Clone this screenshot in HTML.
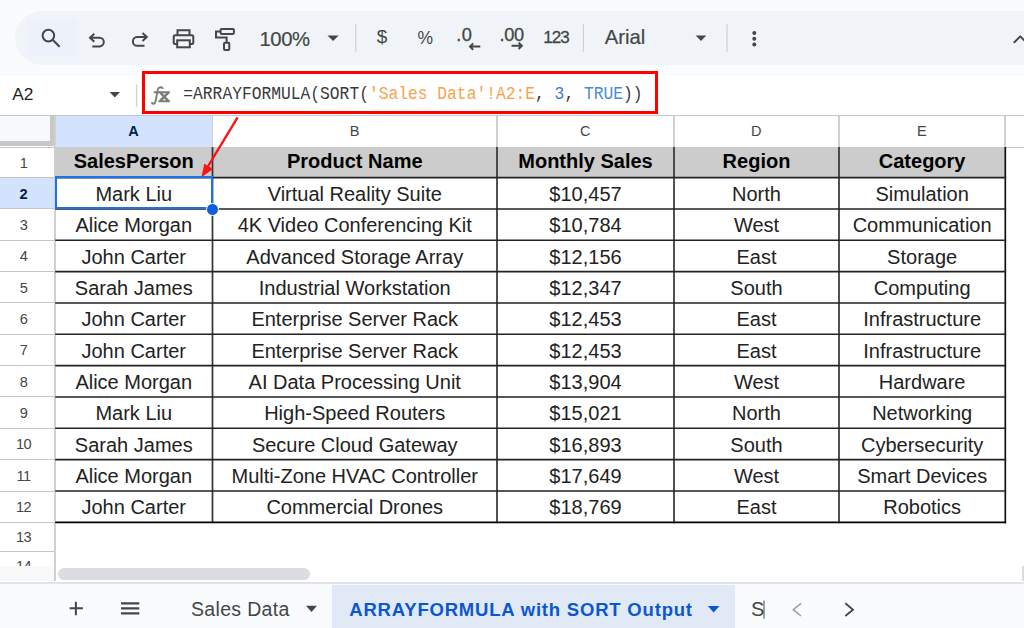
<!DOCTYPE html>
<html><head><meta charset="utf-8">
<style>
*{box-sizing:border-box}
html,body{margin:0;padding:0}
body{width:1024px;height:628px;overflow:hidden;position:relative;background:#fff;font-family:"Liberation Sans",sans-serif;color:#000}
.a{position:absolute}
.t{position:absolute;white-space:nowrap}
.c{text-align:center}
.ic{position:absolute;fill:none;stroke:#444746;stroke-width:2}
</style></head><body>

<div class="a" style="left:0;top:0;width:1024px;height:76px;background:#f9fbfd"></div>
<div class="a" style="left:15px;top:11px;width:1060px;height:54px;border-radius:27px;background:#f0f4f9"></div>
<div class="a" style="left:27px;top:19px;width:50px;height:37px;background:#edf1f9"></div>
<svg class="ic" style="left:0;top:0" width="1024" height="76" viewBox="0 0 1024 76">
<circle cx="48.4" cy="35.6" r="5.8"/>
<path d="M52.6 39.8 L59.6 46.8"/>
<path d="M94.3 33.8 L90 37.8 L94.3 41.8 M90.5 37.8 H99.5 A4.3 4.3 0 0 1 99.5 46.4 H92.3"/>
<path d="M142.5 33 L146.8 37 L142.5 41 M146.3 37 H137.3 A4.4 4.4 0 0 0 137.3 45.8 H144.5"/>
<path d="M177.5 36 V30.2 H189.5 V36" />
<rect x="173.7" y="35.2" width="19.6" height="8.8" rx="1.5"/>
<rect x="177.2" y="40.3" width="12.6" height="7" fill="#f0f4f9"/>
<rect x="220.6" y="28.9" width="13.3" height="5" rx="1.2"/>
<path d="M220.6 31.4 H216 V37.5 H226.6 V42.8"/>
<rect x="224" y="42.8" width="5.3" height="7.2" rx="1"/>
<path d="M338.7 35.5 L333.1 41 L327.5 35.5 Z" fill="#444746" stroke="none"/>
<path d="M706.3 35.5 L701 41 L695.7 35.5 Z" fill="#444746" stroke="none"/>
<path d="M355.8 24.3 V51.7 M583.3 24.3 V51.7 M727 24.3 V51.7" stroke="#c7c7c7" stroke-width="1"/>
<circle cx="754.3" cy="32.9" r="2" fill="#444746" stroke="none"/>
<circle cx="754.3" cy="38.7" r="2" fill="#444746" stroke="none"/>
<circle cx="754.3" cy="44.5" r="2" fill="#444746" stroke="none"/>
<path d="M1014.4 42.2 L1020.3 36.4 L1026.2 42.2" stroke-linejoin="round" stroke-linecap="round"/>
<path d="M470 46.6 H480.3 M473.2 43.4 L470 46.6 L473.2 49.8" stroke-width="2"/>
<path d="M511.5 45.8 H521.8 M518.6 42.6 L521.8 45.8 L518.6 49" stroke-width="2"/>
</svg>
<div class="t" style="left:259.50px;top:29.02px;font-size:20.30px;line-height:20.30px;color:#444746;-webkit-text-stroke:0.2px #444746;letter-spacing:-0.45px">100%</div>
<div class="t" style="left:376.80px;top:27.42px;font-size:19.00px;line-height:19.00px;color:#444746;">$</div>
<div class="t" style="left:417.50px;top:29.89px;font-size:17.50px;line-height:17.50px;color:#444746;">%</div>
<div class="t" style="left:456.30px;top:25.79px;font-size:18.20px;line-height:18.20px;color:#444746;letter-spacing:0.3px;-webkit-text-stroke:0.3px #444746">.0</div>
<div class="t" style="left:499.40px;top:25.79px;font-size:18.20px;line-height:18.20px;color:#444746;letter-spacing:-0.3px;-webkit-text-stroke:0.3px #444746">.00</div>
<div class="t" style="left:543.30px;top:29.41px;font-size:17.00px;line-height:17.00px;color:#444746;letter-spacing:-1px;-webkit-text-stroke:0.3px #444746">123</div>
<div class="t" style="left:604.80px;top:26.52px;font-size:20.30px;line-height:20.30px;color:#444746;-webkit-text-stroke:0.2px #444746">Arial</div>
<div class="a" style="left:0;top:76px;width:1024px;height:39px;background:#fff"></div>
<div class="t" style="left:12.30px;top:85.96px;font-size:17.30px;line-height:17.30px;color:#1f1f1f;">A2</div>
<svg class="a" style="left:0;top:76px" width="1024" height="40"><path d="M109.6 16 H120 L114.8 21.6 Z" fill="#444746"/><path d="M136.7 8.4 V30.8" stroke="#c7c7c7" stroke-width="1"/></svg>
<svg class="a" style="left:0;top:0" width="200" height="120" fill="none" stroke="#7b7b7b" stroke-width="2"><path d="M153.7 92.2 H169.8 M158.4 101.2 H169.9" stroke-width="1.9"/><path d="M160.2 92.6 L168.3 100.9 M168.3 92.6 L160.2 100.9" stroke-width="2.5"/><path d="M163 88.8 C162 86.6 158.6 86.6 157.8 89.6 L155.6 101 C155 104.3 152.6 104.6 151.6 102.2" stroke-width="1.9"/></svg>
<div class="t" style="left:183.3px;top:85.7px;font-size:16.3px;line-height:16px;transform:scaleY(1.12);transform-origin:0 0;font-family:'Liberation Mono',monospace;color:#3a3a3a">=ARRAYFORMULA(SORT(<span style="color:#f5a34e">'Sales Data'!A2:E</span>, <span style="color:#3b78e7">3</span>, <span style="color:#4a8ad8">TRUE</span>))</div>
<div class="a" style="left:142px;top:71px;width:516px;height:43.2px;border:3.6px solid #ff0000"></div>
<div class="a" style="left:0;top:115px;width:1024px;height:1px;background:#c7c7c7"></div>
<div class="a" style="left:0;top:116px;width:50px;height:25px;background:#f8f9fa"></div>
<div class="a" style="left:0;top:141px;width:55px;height:5px;background:#c8c8c8"></div>
<div class="a" style="left:49.5px;top:116px;width:5.5px;height:30px;background:#c8c8c8"></div>
<div class="a" style="left:0;top:146.5px;width:55px;height:1px;background:#c7c7c7"></div>
<div class="a" style="left:55px;top:116px;width:157.5px;height:31px;background:#d3e3fd"></div>
<div class="t c" style="left:55.00px;top:123.73px;font-size:14.50px;line-height:14.50px;color:#041e49;width:157.00px;font-weight:bold">A</div>
<div class="t c" style="left:212.50px;top:123.73px;font-size:14.50px;line-height:14.50px;color:#444746;width:284.00px;">B</div>
<div class="t c" style="left:497.00px;top:123.73px;font-size:14.50px;line-height:14.50px;color:#444746;width:176.50px;">C</div>
<div class="t c" style="left:674.00px;top:123.73px;font-size:14.50px;line-height:14.50px;color:#444746;width:164.50px;">D</div>
<div class="t c" style="left:839.00px;top:123.73px;font-size:14.50px;line-height:14.50px;color:#444746;width:165.80px;">E</div>
<div class="a" style="left:54.15px;top:116px;width:1.7px;height:31px;background:#d0d0d0"></div>
<div class="a" style="left:211.65px;top:116px;width:1.7px;height:31px;background:#d0d0d0"></div>
<div class="a" style="left:496.15px;top:116px;width:1.7px;height:31px;background:#d0d0d0"></div>
<div class="a" style="left:673.15px;top:116px;width:1.7px;height:31px;background:#d0d0d0"></div>
<div class="a" style="left:838.15px;top:116px;width:1.7px;height:31px;background:#d0d0d0"></div>
<div class="a" style="left:1004.45px;top:116px;width:1.7px;height:31px;background:#d0d0d0"></div>
<div class="a" style="left:55px;top:146.6px;width:969px;height:1px;background:#c7c7c7"></div>
<div class="a" style="left:53.9px;top:147px;width:1.9px;height:434px;background:#d0d0d0"></div>
<div class="a" style="left:0;top:177.60px;width:54.2px;height:31.34px;background:#d3e3fd"></div>
<div class="a" style="left:0;top:177.10px;width:54.2px;height:1px;background:#c7c7c7"></div>
<div class="t c" style="left:0.00px;top:155.64px;font-size:14.60px;line-height:14.60px;color:#444746;width:47.00px;letter-spacing:-0.6px">1</div>
<div class="a" style="left:0;top:208.44px;width:54.2px;height:1px;background:#c7c7c7"></div>
<div class="t c" style="left:0.00px;top:186.61px;font-size:14.60px;line-height:14.60px;color:#041e49;width:47.00px;font-weight:bold">2</div>
<div class="a" style="left:0;top:239.78px;width:54.2px;height:1px;background:#c7c7c7"></div>
<div class="t c" style="left:0.00px;top:217.95px;font-size:14.60px;line-height:14.60px;color:#444746;width:47.00px;letter-spacing:-0.6px">3</div>
<div class="a" style="left:0;top:271.12px;width:54.2px;height:1px;background:#c7c7c7"></div>
<div class="t c" style="left:0.00px;top:249.29px;font-size:14.60px;line-height:14.60px;color:#444746;width:47.00px;letter-spacing:-0.6px">4</div>
<div class="a" style="left:0;top:302.46px;width:54.2px;height:1px;background:#c7c7c7"></div>
<div class="t c" style="left:0.00px;top:280.63px;font-size:14.60px;line-height:14.60px;color:#444746;width:47.00px;letter-spacing:-0.6px">5</div>
<div class="a" style="left:0;top:333.80px;width:54.2px;height:1px;background:#c7c7c7"></div>
<div class="t c" style="left:0.00px;top:311.97px;font-size:14.60px;line-height:14.60px;color:#444746;width:47.00px;letter-spacing:-0.6px">6</div>
<div class="a" style="left:0;top:365.14px;width:54.2px;height:1px;background:#c7c7c7"></div>
<div class="t c" style="left:0.00px;top:343.31px;font-size:14.60px;line-height:14.60px;color:#444746;width:47.00px;letter-spacing:-0.6px">7</div>
<div class="a" style="left:0;top:396.48px;width:54.2px;height:1px;background:#c7c7c7"></div>
<div class="t c" style="left:0.00px;top:374.65px;font-size:14.60px;line-height:14.60px;color:#444746;width:47.00px;letter-spacing:-0.6px">8</div>
<div class="a" style="left:0;top:427.82px;width:54.2px;height:1px;background:#c7c7c7"></div>
<div class="t c" style="left:0.00px;top:405.99px;font-size:14.60px;line-height:14.60px;color:#444746;width:47.00px;letter-spacing:-0.6px">9</div>
<div class="a" style="left:0;top:459.16px;width:54.2px;height:1px;background:#c7c7c7"></div>
<div class="t c" style="left:0.00px;top:437.33px;font-size:14.60px;line-height:14.60px;color:#444746;width:47.00px;letter-spacing:-0.6px">10</div>
<div class="a" style="left:0;top:490.50px;width:54.2px;height:1px;background:#c7c7c7"></div>
<div class="t c" style="left:0.00px;top:468.67px;font-size:14.60px;line-height:14.60px;color:#444746;width:47.00px;letter-spacing:-0.6px">11</div>
<div class="a" style="left:0;top:521.84px;width:54.2px;height:1px;background:#c7c7c7"></div>
<div class="t c" style="left:0.00px;top:500.01px;font-size:14.60px;line-height:14.60px;color:#444746;width:47.00px;letter-spacing:-0.6px">12</div>
<div class="a" style="left:0;top:551.04px;width:54.2px;height:1px;background:#c7c7c7"></div>
<div class="t c" style="left:0.00px;top:530.28px;font-size:14.60px;line-height:14.60px;color:#444746;width:47.00px;letter-spacing:-0.6px">13</div>
<div class="a" style="left:0;top:580.24px;width:54.2px;height:1px;background:#c7c7c7"></div>
<div class="t c" style="left:0.00px;top:559.48px;font-size:14.60px;line-height:14.60px;color:#444746;width:47.00px;letter-spacing:-0.6px">14</div>
<div class="a" style="left:55px;top:147px;width:950.3px;height:30.60px;background:#cccccc"></div>
<div class="t c" style="left:55.00px;top:151.47px;font-size:20.00px;line-height:20.00px;color:#000;width:157.50px;font-weight:bold">SalesPerson</div>
<div class="t c" style="left:212.50px;top:151.47px;font-size:20.00px;line-height:20.00px;color:#000;width:284.50px;font-weight:bold">Product Name</div>
<div class="t c" style="left:497.00px;top:151.47px;font-size:20.00px;line-height:20.00px;color:#000;width:177.00px;font-weight:bold">Monthly Sales</div>
<div class="t c" style="left:674.00px;top:151.47px;font-size:20.00px;line-height:20.00px;color:#000;width:165.00px;font-weight:bold">Region</div>
<div class="t c" style="left:839.00px;top:151.47px;font-size:20.00px;line-height:20.00px;color:#000;width:166.30px;font-weight:bold">Category</div>
<div class="t c" style="left:55.00px;top:183.91px;font-size:20.00px;line-height:20.00px;color:#222;width:157.50px;">Mark Liu</div>
<div class="t c" style="left:212.50px;top:183.91px;font-size:20.00px;line-height:20.00px;color:#222;width:284.50px;">Virtual Reality Suite</div>
<div class="t c" style="left:497.00px;top:183.91px;font-size:20.00px;line-height:20.00px;color:#222;width:177.00px;">$10,457</div>
<div class="t c" style="left:674.00px;top:183.91px;font-size:20.00px;line-height:20.00px;color:#222;width:165.00px;">North</div>
<div class="t c" style="left:839.00px;top:183.91px;font-size:20.00px;line-height:20.00px;color:#222;width:166.30px;">Simulation</div>
<div class="t c" style="left:55.00px;top:215.25px;font-size:20.00px;line-height:20.00px;color:#222;width:157.50px;">Alice Morgan</div>
<div class="t c" style="left:212.50px;top:215.25px;font-size:20.00px;line-height:20.00px;color:#222;width:284.50px;">4K Video Conferencing Kit</div>
<div class="t c" style="left:497.00px;top:215.25px;font-size:20.00px;line-height:20.00px;color:#222;width:177.00px;">$10,784</div>
<div class="t c" style="left:674.00px;top:215.25px;font-size:20.00px;line-height:20.00px;color:#222;width:165.00px;">West</div>
<div class="t c" style="left:839.00px;top:215.25px;font-size:20.00px;line-height:20.00px;color:#222;width:166.30px;">Communication</div>
<div class="t c" style="left:55.00px;top:246.59px;font-size:20.00px;line-height:20.00px;color:#222;width:157.50px;">John Carter</div>
<div class="t c" style="left:212.50px;top:246.59px;font-size:20.00px;line-height:20.00px;color:#222;width:284.50px;">Advanced Storage Array</div>
<div class="t c" style="left:497.00px;top:246.59px;font-size:20.00px;line-height:20.00px;color:#222;width:177.00px;">$12,156</div>
<div class="t c" style="left:674.00px;top:246.59px;font-size:20.00px;line-height:20.00px;color:#222;width:165.00px;">East</div>
<div class="t c" style="left:839.00px;top:246.59px;font-size:20.00px;line-height:20.00px;color:#222;width:166.30px;">Storage</div>
<div class="t c" style="left:55.00px;top:277.93px;font-size:20.00px;line-height:20.00px;color:#222;width:157.50px;">Sarah James</div>
<div class="t c" style="left:212.50px;top:277.93px;font-size:20.00px;line-height:20.00px;color:#222;width:284.50px;">Industrial Workstation</div>
<div class="t c" style="left:497.00px;top:277.93px;font-size:20.00px;line-height:20.00px;color:#222;width:177.00px;">$12,347</div>
<div class="t c" style="left:674.00px;top:277.93px;font-size:20.00px;line-height:20.00px;color:#222;width:165.00px;">South</div>
<div class="t c" style="left:839.00px;top:277.93px;font-size:20.00px;line-height:20.00px;color:#222;width:166.30px;">Computing</div>
<div class="t c" style="left:55.00px;top:309.27px;font-size:20.00px;line-height:20.00px;color:#222;width:157.50px;">John Carter</div>
<div class="t c" style="left:212.50px;top:309.27px;font-size:20.00px;line-height:20.00px;color:#222;width:284.50px;">Enterprise Server Rack</div>
<div class="t c" style="left:497.00px;top:309.27px;font-size:20.00px;line-height:20.00px;color:#222;width:177.00px;">$12,453</div>
<div class="t c" style="left:674.00px;top:309.27px;font-size:20.00px;line-height:20.00px;color:#222;width:165.00px;">East</div>
<div class="t c" style="left:839.00px;top:309.27px;font-size:20.00px;line-height:20.00px;color:#222;width:166.30px;">Infrastructure</div>
<div class="t c" style="left:55.00px;top:340.61px;font-size:20.00px;line-height:20.00px;color:#222;width:157.50px;">John Carter</div>
<div class="t c" style="left:212.50px;top:340.61px;font-size:20.00px;line-height:20.00px;color:#222;width:284.50px;">Enterprise Server Rack</div>
<div class="t c" style="left:497.00px;top:340.61px;font-size:20.00px;line-height:20.00px;color:#222;width:177.00px;">$12,453</div>
<div class="t c" style="left:674.00px;top:340.61px;font-size:20.00px;line-height:20.00px;color:#222;width:165.00px;">East</div>
<div class="t c" style="left:839.00px;top:340.61px;font-size:20.00px;line-height:20.00px;color:#222;width:166.30px;">Infrastructure</div>
<div class="t c" style="left:55.00px;top:371.95px;font-size:20.00px;line-height:20.00px;color:#222;width:157.50px;">Alice Morgan</div>
<div class="t c" style="left:212.50px;top:371.95px;font-size:20.00px;line-height:20.00px;color:#222;width:284.50px;">AI Data Processing Unit</div>
<div class="t c" style="left:497.00px;top:371.95px;font-size:20.00px;line-height:20.00px;color:#222;width:177.00px;">$13,904</div>
<div class="t c" style="left:674.00px;top:371.95px;font-size:20.00px;line-height:20.00px;color:#222;width:165.00px;">West</div>
<div class="t c" style="left:839.00px;top:371.95px;font-size:20.00px;line-height:20.00px;color:#222;width:166.30px;">Hardware</div>
<div class="t c" style="left:55.00px;top:403.29px;font-size:20.00px;line-height:20.00px;color:#222;width:157.50px;">Mark Liu</div>
<div class="t c" style="left:212.50px;top:403.29px;font-size:20.00px;line-height:20.00px;color:#222;width:284.50px;">High-Speed Routers</div>
<div class="t c" style="left:497.00px;top:403.29px;font-size:20.00px;line-height:20.00px;color:#222;width:177.00px;">$15,021</div>
<div class="t c" style="left:674.00px;top:403.29px;font-size:20.00px;line-height:20.00px;color:#222;width:165.00px;">North</div>
<div class="t c" style="left:839.00px;top:403.29px;font-size:20.00px;line-height:20.00px;color:#222;width:166.30px;">Networking</div>
<div class="t c" style="left:55.00px;top:434.63px;font-size:20.00px;line-height:20.00px;color:#222;width:157.50px;">Sarah James</div>
<div class="t c" style="left:212.50px;top:434.63px;font-size:20.00px;line-height:20.00px;color:#222;width:284.50px;">Secure Cloud Gateway</div>
<div class="t c" style="left:497.00px;top:434.63px;font-size:20.00px;line-height:20.00px;color:#222;width:177.00px;">$16,893</div>
<div class="t c" style="left:674.00px;top:434.63px;font-size:20.00px;line-height:20.00px;color:#222;width:165.00px;">South</div>
<div class="t c" style="left:839.00px;top:434.63px;font-size:20.00px;line-height:20.00px;color:#222;width:166.30px;">Cybersecurity</div>
<div class="t c" style="left:55.00px;top:465.97px;font-size:20.00px;line-height:20.00px;color:#222;width:157.50px;">Alice Morgan</div>
<div class="t c" style="left:212.50px;top:465.97px;font-size:20.00px;line-height:20.00px;color:#222;width:284.50px;">Multi-Zone HVAC Controller</div>
<div class="t c" style="left:497.00px;top:465.97px;font-size:20.00px;line-height:20.00px;color:#222;width:177.00px;">$17,649</div>
<div class="t c" style="left:674.00px;top:465.97px;font-size:20.00px;line-height:20.00px;color:#222;width:165.00px;">West</div>
<div class="t c" style="left:839.00px;top:465.97px;font-size:20.00px;line-height:20.00px;color:#222;width:166.30px;">Smart Devices</div>
<div class="t c" style="left:55.00px;top:497.31px;font-size:20.00px;line-height:20.00px;color:#222;width:157.50px;">John Carter</div>
<div class="t c" style="left:212.50px;top:497.31px;font-size:20.00px;line-height:20.00px;color:#222;width:284.50px;">Commercial Drones</div>
<div class="t c" style="left:497.00px;top:497.31px;font-size:20.00px;line-height:20.00px;color:#222;width:177.00px;">$18,769</div>
<div class="t c" style="left:674.00px;top:497.31px;font-size:20.00px;line-height:20.00px;color:#222;width:165.00px;">East</div>
<div class="t c" style="left:839.00px;top:497.31px;font-size:20.00px;line-height:20.00px;color:#222;width:166.30px;">Robotics</div>
<svg class="a" style="left:0;top:0" width="1024" height="628"><path d="M212.50 147 V523.19" stroke="#333" stroke-width="1.7"/><path d="M497.00 147 V523.19" stroke="#333" stroke-width="1.7"/><path d="M674.00 147 V523.19" stroke="#333" stroke-width="1.7"/><path d="M839.00 147 V523.19" stroke="#333" stroke-width="1.7"/><path d="M1005.30 147 V523.19" stroke="#111" stroke-width="1.7"/><path d="M55.2 177.60 H1006.15" stroke="#222" stroke-width="1.6"/><path d="M55.2 208.94 H1006.15" stroke="#222" stroke-width="1.6"/><path d="M55.2 240.28 H1006.15" stroke="#222" stroke-width="1.6"/><path d="M55.2 271.62 H1006.15" stroke="#222" stroke-width="1.6"/><path d="M55.2 302.96 H1006.15" stroke="#222" stroke-width="1.6"/><path d="M55.2 334.30 H1006.15" stroke="#222" stroke-width="1.6"/><path d="M55.2 365.64 H1006.15" stroke="#222" stroke-width="1.6"/><path d="M55.2 396.98 H1006.15" stroke="#222" stroke-width="1.6"/><path d="M55.2 428.32 H1006.15" stroke="#222" stroke-width="1.6"/><path d="M55.2 459.66 H1006.15" stroke="#222" stroke-width="1.6"/><path d="M55.2 491.00 H1006.15" stroke="#222" stroke-width="1.6"/><path d="M55.2 522.34 H1006.15" stroke="#000" stroke-width="1.6"/></svg>
<div class="a" style="left:54.8px;top:176.2px;width:158.4px;height:32.6px;border:2.3px solid #1a73e8"></div>
<div class="a" style="left:205.9px;top:202.8px;width:13px;height:13px;border-radius:50%;background:#0f5fd8;border:1px solid #fff"></div>
<svg class="a" style="left:0;top:0" width="1024" height="628"><path d="M237.6 117.3 L207 168" stroke="#fa1414" stroke-width="2.4" fill="none"/><path d="M201.4 177.2 L204.3 163.8 L213.2 168.9 Z" fill="#fa1414"/></svg>
<div class="a" style="left:0;top:566px;width:54px;height:15px;background:#f8f9fa"></div>
<div class="a" style="left:58px;top:568px;width:251.5px;height:12px;border-radius:6px;background:#dadce0"></div>
<div class="a" style="left:1022px;top:566px;width:2px;height:15px;background:#dadce0"></div>
<div class="a" style="left:0;top:582px;width:1024px;height:46px;background:#f9fbfd;border-top:2.6px solid #e1e3e6"></div>
<div class="a" style="left:332.3px;top:584.6px;width:402.5px;height:45px;background:#e1e9f7"></div>
<svg class="a ic" style="left:0;top:581px" width="1024" height="47"><path d="M69.6 27.3 H82.9 M75.9 20.7 V34.3" stroke-width="2"/>
<path d="M121 22.4 H139.3 M121 27.4 H139.3 M121 32.4 H139.3" stroke-width="2.3"/>
<path d="M306 24.8 H317 L311.5 31 Z" fill="#444746" stroke="none"/>
<path d="M707.8 25 H719.5 L713.65 31.5 Z" fill="#0b57d0" stroke="none"/>
<path d="M801 22.3 L793.3 28.7 L801 35" stroke="#9aa0a6" stroke-width="1.6"/>
<path d="M845.3 22.3 L853 28.7 L845.3 35" stroke="#444746" stroke-width="1.8"/>
<path d="M764 19.5 V37.5" stroke="#444746" stroke-width="1"/>
</svg>
<div class="t" style="left:191.00px;top:599.99px;font-size:19.50px;line-height:19.50px;color:#444746;letter-spacing:0.33px">Sales Data</div>
<div class="t" style="left:349.30px;top:600.54px;font-size:18.50px;line-height:18.50px;color:#0b57d0;font-weight:bold;letter-spacing:0.8px">ARRAYFORMULA with SORT Output</div>
<div class="t" style="left:751.00px;top:598.87px;font-size:20.00px;line-height:20.00px;color:#444746;">S</div>
</body></html>
